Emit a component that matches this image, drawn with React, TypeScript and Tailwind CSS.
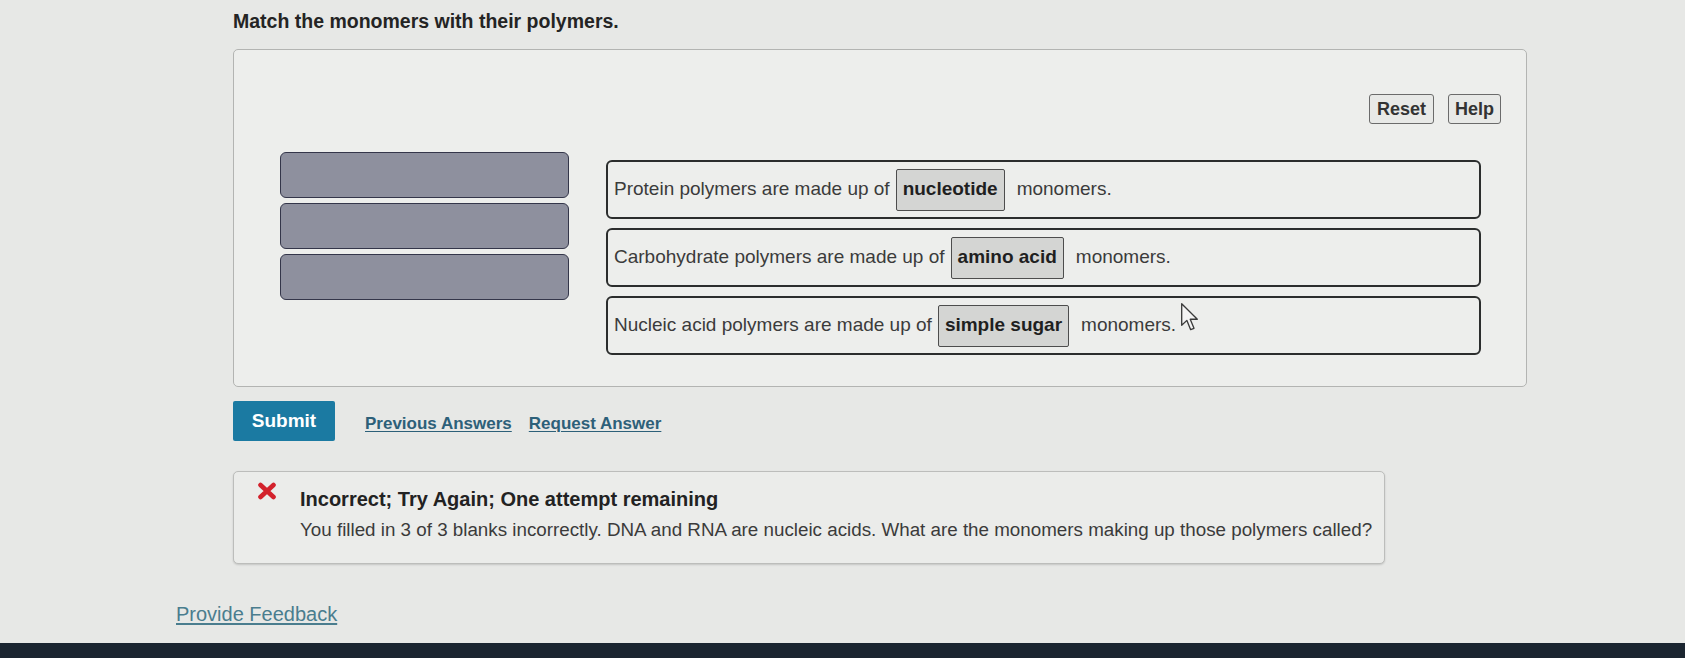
import React from "react";

const sentences = [
  { before: "Protein polymers are made up of", token: "nucleotide" },
  { before: "Carbohydrate polymers are made up of", token: "amino acid" },
  { before: "Nucleic acid polymers are made up of", token: "simple sugar" },
];

function WrongMark() {
  return (
    <svg viewBox="0 0 20 18" className="w-[20px] h-[18px] shrink-0">
      <path d="M3.5 3 L16.5 15 M16.5 3 L3.5 15" stroke="#d3222c" strokeWidth="4.6" strokeLinecap="round" />
    </svg>
  );
}

function Cursor() {
  return (
    <svg viewBox="0 0 18 28" className="absolute left-[1180px] top-[302px] w-[20px] h-[31px]">
      <path
        d="M1.5 1.5 L1.5 21 L6.2 16.6 L9.6 25 L12.6 23.8 L9.2 15.6 L15.6 15.6 Z"
        fill="#f4f4f4"
        stroke="#3a3a3a"
        strokeWidth="1.2"
        strokeLinejoin="round"
      />
    </svg>
  );
}

export default function App() {
  return (
    <div className="relative h-[658px] w-full overflow-hidden bg-[#e7e8e6] flex flex-col font-['Liberation_Sans',Arial,sans-serif]">
      <div className="flex-1 pl-[233px] pt-[10px]">
        <h1 className="text-[19.5px] leading-[22px] font-bold text-[#242424]">
          Match the monomers with their polymers.
        </h1>

        {/* question panel */}
        <div className="mt-[17px] w-[1294px] h-[338px] border border-[#b3b4b2] rounded-[5px] bg-[#edeeec] pt-[44px] pr-[25px]">
          <div className="flex justify-end gap-[14px]">
            <button className="h-[30px] px-[7px] border border-[#6b6b6b] rounded-[3px] bg-[#e8e9e7] text-[18px] font-bold text-[#333]">
              Reset
            </button>
            <button className="h-[30px] px-[6px] border border-[#6b6b6b] rounded-[3px] bg-[#e8e9e7] text-[18px] font-bold text-[#333]">
              Help
            </button>
          </div>

          <div className="flex mt-[28px]">
            <div className="ml-[46px] w-[289px] flex flex-col gap-[5px]">
              {[0, 1, 2].map((i) => (
                <div key={i} className="h-[46px] rounded-[6px] border-[1.5px] border-[#34364a] bg-[#8e909e]" />
              ))}
            </div>

            <div className="ml-[37px] w-[875px] flex flex-col gap-[9px] pt-[8px]">
              {sentences.map((s) => (
                <div
                  key={s.token}
                  className="h-[59px] border-2 border-[#2b2d2d] rounded-[6px] pl-[6px] flex items-center text-[19px] text-[#3b3b3b]"
                >
                  <span>{s.before}</span>
                  <span className="ml-[6px] h-[42px] px-[6px] flex items-center border-[1.5px] border-[#4d4d4d] rounded-[2px] bg-[#d4d5d3] font-bold text-[#1f1f1f]">
                    {s.token}
                  </span>
                  <span className="ml-[12px]">monomers.</span>
                </div>
              ))}
            </div>
          </div>
        </div>

        {/* actions */}
        <div className="mt-[14px] flex items-center">
          <button className="w-[102px] h-[40px] bg-[#1b7aa2] rounded-[2px] text-white text-[19px] font-bold">
            Submit
          </button>
          <a className="ml-[30px] mt-[6px] text-[17px] font-bold text-[#2d6079] underline underline-offset-2">
            Previous Answers
          </a>
          <a className="ml-[17px] mt-[6px] text-[17px] font-bold text-[#2d6079] underline underline-offset-2">
            Request Answer
          </a>
        </div>

        {/* feedback */}
        <div className="mt-[30px] w-[1152px] h-[93px] border border-[#bcbdbb] rounded-[5px] bg-[#ebecea] shadow-[0_1px_2px_rgba(0,0,0,0.15)] flex">
          <div className="ml-[23px] mt-[10px]">
            <WrongMark />
          </div>
          <div className="ml-[23px] pt-[15px]">
            <p className="text-[20px] leading-[24px] font-bold text-[#222]">
              Incorrect; Try Again; One attempt remaining
            </p>
            <p className="mt-[7px] text-[18.8px] leading-[24px] text-[#3b3b3b] whitespace-nowrap">
              You filled in 3 of 3 blanks incorrectly. DNA and RNA are nucleic acids. What are the monomers making up those polymers called?
            </p>
          </div>
        </div>

        <a className="block w-max -ml-[57px] mt-[38px] text-[20px] leading-[24px] text-[#4a7d8e] underline underline-offset-2">
          Provide Feedback
        </a>
      </div>
      <div className="h-[15px] bg-[#1b2530]" />
      <Cursor />
    </div>
  );
}
